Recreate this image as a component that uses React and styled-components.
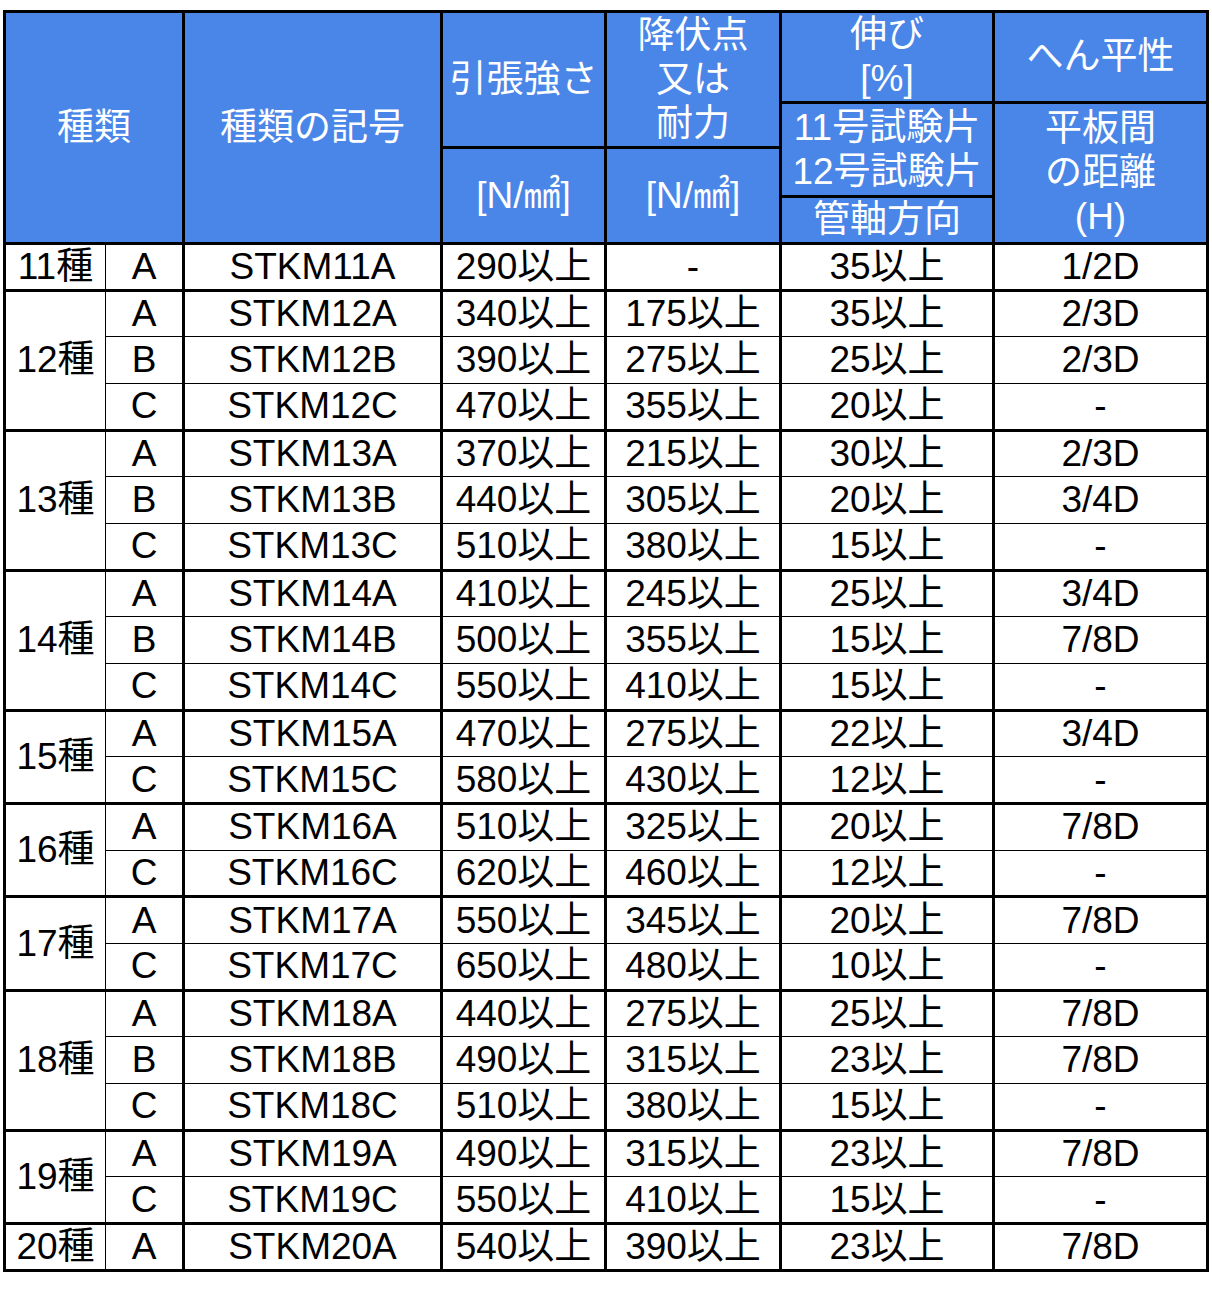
import React from "react"
import styled, { createGlobalStyle } from "styled-components"

const GlobalStyle = createGlobalStyle`
  html, body {
    margin: 0;
    padding: 0;
    background: #fff;
  }
  body {
    font-family: "Liberation Sans", "Noto Sans CJK JP", sans-serif;
  }
`

const groups = [
  { kind: "11種", rows: [["A", "STKM11A", "290以上", "-", "35以上", "1/2D"]] },
  {
    kind: "12種",
    rows: [
      ["A", "STKM12A", "340以上", "175以上", "35以上", "2/3D"],
      ["B", "STKM12B", "390以上", "275以上", "25以上", "2/3D"],
      ["C", "STKM12C", "470以上", "355以上", "20以上", "-"],
    ],
  },
  {
    kind: "13種",
    rows: [
      ["A", "STKM13A", "370以上", "215以上", "30以上", "2/3D"],
      ["B", "STKM13B", "440以上", "305以上", "20以上", "3/4D"],
      ["C", "STKM13C", "510以上", "380以上", "15以上", "-"],
    ],
  },
  {
    kind: "14種",
    rows: [
      ["A", "STKM14A", "410以上", "245以上", "25以上", "3/4D"],
      ["B", "STKM14B", "500以上", "355以上", "15以上", "7/8D"],
      ["C", "STKM14C", "550以上", "410以上", "15以上", "-"],
    ],
  },
  {
    kind: "15種",
    rows: [
      ["A", "STKM15A", "470以上", "275以上", "22以上", "3/4D"],
      ["C", "STKM15C", "580以上", "430以上", "12以上", "-"],
    ],
  },
  {
    kind: "16種",
    rows: [
      ["A", "STKM16A", "510以上", "325以上", "20以上", "7/8D"],
      ["C", "STKM16C", "620以上", "460以上", "12以上", "-"],
    ],
  },
  {
    kind: "17種",
    rows: [
      ["A", "STKM17A", "550以上", "345以上", "20以上", "7/8D"],
      ["C", "STKM17C", "650以上", "480以上", "10以上", "-"],
    ],
  },
  {
    kind: "18種",
    rows: [
      ["A", "STKM18A", "440以上", "275以上", "25以上", "7/8D"],
      ["B", "STKM18B", "490以上", "315以上", "23以上", "7/8D"],
      ["C", "STKM18C", "510以上", "380以上", "15以上", "-"],
    ],
  },
  {
    kind: "19種",
    rows: [
      ["A", "STKM19A", "490以上", "315以上", "23以上", "7/8D"],
      ["C", "STKM19C", "550以上", "410以上", "15以上", "-"],
    ],
  },
  { kind: "20種", rows: [["A", "STKM20A", "540以上", "390以上", "23以上", "7/8D"]] },
]

const colWidths = [101, 78, 258, 164, 175, 213, 214]

const App = () => (
  <>
    <GlobalStyle />
    <Page>
      <Table>
        <colgroup>
          {colWidths.map((w, i) => (
            <col key={i} style={{ width: w }} />
          ))}
        </colgroup>
        <thead>
          <HeadRow $h={89}>
            <HeadCell colSpan={2} rowSpan={4}>種類</HeadCell>
            <HeadCell rowSpan={4}>種類の記号</HeadCell>
            <HeadCell rowSpan={2}>引張強さ</HeadCell>
            <HeadCell rowSpan={2}>
              降伏点
              <br />
              又は
              <br />
              耐力
            </HeadCell>
            <HeadCell $bottom="2px">
              伸び
              <br />
              [%]
            </HeadCell>
            <HeadCell $bottom="2px">へん平性</HeadCell>
          </HeadRow>
          <HeadRow $h={45}>
            <HeadCell rowSpan={2} $bottom="2px">
              11号試験片
              <br />
              12号試験片
            </HeadCell>
            <HeadCell rowSpan={3}>
              平板間
              <br />
              の距離
              <br />
              (H)
            </HeadCell>
          </HeadRow>
          <HeadRow $h={49}>
            <HeadCell rowSpan={2}>[N/㎟]</HeadCell>
            <HeadCell rowSpan={2}>[N/㎟]</HeadCell>
          </HeadRow>
          <HeadRow $h={42}>
            <HeadCell>管軸方向</HeadCell>
          </HeadRow>
        </thead>
        <tbody>
          {groups.map(group =>
            group.rows.map((row, i) => (
              <BodyRow key={row[1]}>
                {i === 0 && (
                  <KindCell rowSpan={group.rows.length}>{group.kind}</KindCell>
                )}
                {row.map((value, j) => (
                  <Cell key={j} $first={i === 0} $letter={j === 0}>
                    {value}
                  </Cell>
                ))}
              </BodyRow>
            ))
          )}
        </tbody>
      </Table>
    </Page>
  </>
)

const Page = styled.div`
  padding: 10px 0 0 3px;
`

const Table = styled.table`
  border-collapse: collapse;
  table-layout: fixed;
  width: 1206px;
  border: 3px solid #000;
  font-size: 37px;
`

const HeadRow = styled.tr`
  height: ${p => p.$h}px;
`

const HeadCell = styled.th`
  background: #4a86e8;
  color: #fff;
  font-weight: normal;
  line-height: 44px;
  padding: 0;
  text-align: center;
  vertical-align: middle;
  border: 3px solid #000;
  border-bottom-width: ${p => p.$bottom || "3px"};
  white-space: nowrap;
`

const BodyRow = styled.tr`
  height: 46.68px;
`

const Cell = styled.td`
  color: #000;
  background: #fff;
  padding: 0;
  line-height: 40px;
  text-align: center;
  vertical-align: middle;
  white-space: nowrap;
  border-left: ${p => (p.$letter ? "1px" : "3px")} solid #000;
  border-right: 3px solid #000;
  border-top: ${p => (p.$first ? "3px" : "1px")} solid #000;
  border-bottom: 1px solid #000;
`

const KindCell = styled.td`
  color: #000;
  background: #fff;
  padding: 0;
  line-height: 40px;
  text-align: center;
  vertical-align: middle;
  white-space: nowrap;
  border: 3px solid #000;
  border-right: 1px solid #000;
`

export default App
